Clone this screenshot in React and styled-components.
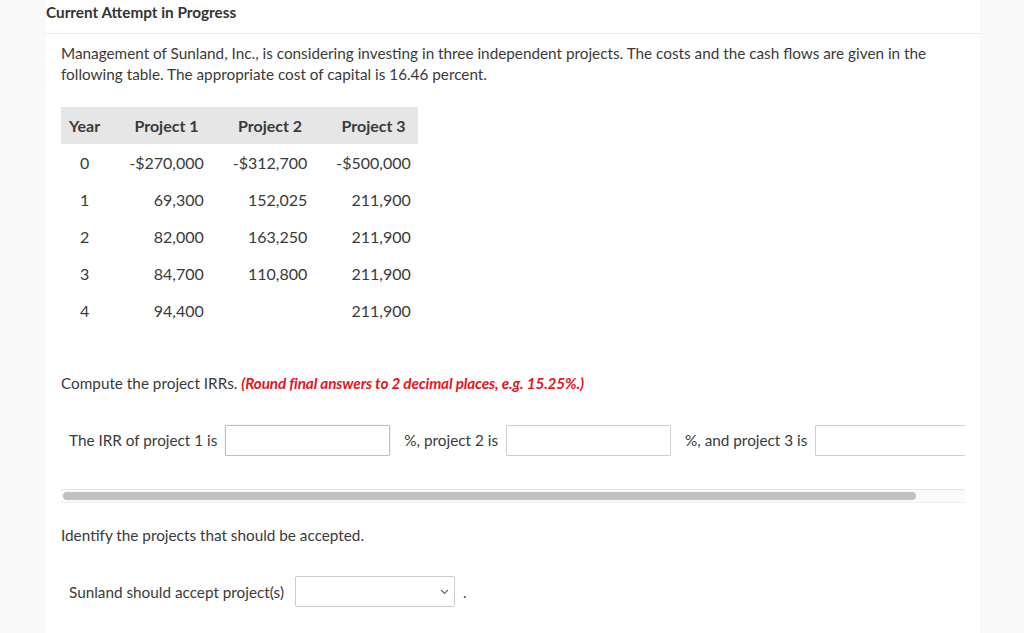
import React from "react"
import styled, { createGlobalStyle } from "styled-components"

const GlobalStyle = createGlobalStyle`
  html, body {
    margin: 0;
    padding: 0;
    background: #f9f9f9;
  }
  body {
    font-family: Lato, "Open Sans", sans-serif;
    color: #333;
  }
`

const rows = [
  ["0", "-$270,000", "-$312,700", "-$500,000"],
  ["1", "69,300", "152,025", "211,900"],
  ["2", "82,000", "163,250", "211,900"],
  ["3", "84,700", "110,800", "211,900"],
  ["4", "94,400", "", "211,900"],
]

const Chevron = () => (
  <svg width="9" height="6" viewBox="0 0 9 6" fill="none">
    <path d="M1 1l3.5 3.5L8 1" stroke="#666" strokeWidth="1.1" />
  </svg>
)

const App = () => (
  <>
    <GlobalStyle />
    <Page>
      <Panel>
        <Title>Current Attempt in Progress</Title>
        <Body>
          <Intro>
            Management of Sunland, Inc., is considering investing in three independent projects. The costs and the cash flows are given in the following table. The appropriate cost of capital is 16.46 percent.
          </Intro>
          <Table>
            <thead>
              <tr>
                <Th>Year</Th>
                <Th $wide>Project 1</Th>
                <Th $wide>Project 2</Th>
                <Th $wide>Project 3</Th>
              </tr>
            </thead>
            <tbody>
              {rows.map((r) => (
                <tr key={r[0]}>
                  <YearCell>{r[0]}</YearCell>
                  <Td>{r[1]}</Td>
                  <Td>{r[2]}</Td>
                  <Td>{r[3]}</Td>
                </tr>
              ))}
            </tbody>
          </Table>

          <Question $top={44}>
            Compute the project IRRs. <Hint>(Round final answers to 2 decimal places, e.g. 15.25%.)</Hint>
          </Question>

          <ScrollBox>
            <InputRow>
              <span>The IRR of project 1 is</span>
              <Field $focused />
              <span>%, project 2 is</span>
              <Field />
              <span>%, and project 3 is</span>
              <Field />
            </InputRow>
          </ScrollBox>
          <Track>
            <Thumb />
          </Track>

          <Question $top={22}>Identify the projects that should be accepted.</Question>

          <SelectRow>
            <span>Sunland should accept project(s)</span>
            <Select>
              <Chevron />
            </Select>
            <span>.</span>
          </SelectRow>
        </Body>
      </Panel>
    </Page>
  </>
)

const Page = styled.div`
  display: flex;
  justify-content: flex-start;
  padding-left: 46px;
  min-height: 633px;
`

const Panel = styled.div`
  width: 934px;
  background: #fff;
  min-height: 633px;
`

const Title = styled.div`
  font-size: 15.3px;
  font-weight: 700;
  color: #333;
  height: 34px;
  line-height: 25px;
  border-bottom: 1px solid #ececec;
  box-sizing: border-box;
`

const Body = styled.div`
  padding: 9px 15px 0 15px;
`

const Intro = styled.p`
  margin: 0;
  font-size: 15.3px;
  line-height: 21px;
  color: #3a3a3a;
`

const Table = styled.table`
  border-collapse: collapse;
  margin-top: 22px;
  font-size: 16px;
  color: #3a3a3a;
`

const Th = styled.th`
  background: #e6e6e6;
  height: 37px;
  font-weight: 700;
  text-align: center;
  padding: 0 7px 0 ${(p) => (p.$wide ? "22px" : "8px")};
`

const YearCell = styled.td`
  height: 37px;
  text-align: center;
  padding: 0 7px 0 8px;
`

const Td = styled.td`
  height: 37px;
  text-align: right;
  padding: 0 7px 0 22px;
`

const Question = styled.div`
  margin-top: ${(p) => p.$top}px;
  font-size: 15.3px;
  line-height: 21px;
  color: #3a3a3a;
`

const Hint = styled.span`
  color: #e8141c;
  font-weight: 700;
  font-style: italic;
  letter-spacing: -0.15px;
`

const ScrollBox = styled.div`
  width: 904px;
  overflow: hidden;
  margin-top: 30px;
`

const InputRow = styled.div`
  display: flex;
  align-items: center;
  white-space: nowrap;
  font-size: 15.3px;
  color: #3a3a3a;
  padding: 0 0 0 8px;
  height: 32px;

  & > span {
    padding-right: 8px;
  }
  & > span + div {
    margin-right: 14px;
  }
`

const Field = styled.div`
  flex: none;
  width: 163px;
  height: 29px;
  border: 1px solid ${(p) => (p.$focused ? "#9ec5ea" : "#cfcfcf")};
  box-shadow: ${(p) => (p.$focused ? "0 0 2px rgba(100,160,220,0.35)" : "none")};
  border-radius: 1px;
  background: #fff;
`

const Track = styled.div`
  width: 904px;
  height: 14px;
  margin-top: 33px;
  box-sizing: border-box;
  background: #fafafa;
  border-top: 1px solid #e6e6e6;
  border-bottom: 1px solid #ededed;
  display: flex;
  align-items: center;
  padding-left: 2px;
`

const Thumb = styled.div`
  width: 853px;
  height: 8px;
  border-radius: 4px;
  background: #c1c1c1;
`

const SelectRow = styled.div`
  display: flex;
  align-items: center;
  gap: 8px;
  margin-top: 30px;
  padding-left: 8px;
  font-size: 15.3px;
  color: #3a3a3a;

  & > span:first-child {
    margin-right: 3px;
  }
`

const Select = styled.div`
  width: 153px;
  height: 29px;
  border: 1px solid #cccccc;
  border-radius: 2px;
  display: flex;
  align-items: center;
  justify-content: flex-end;
  padding-right: 5px;
`

export default App
